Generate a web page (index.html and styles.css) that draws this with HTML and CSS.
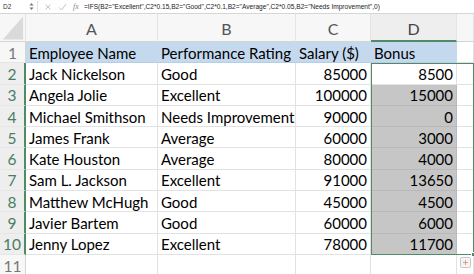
FILE: index.html
```html
<!DOCTYPE html>
<html>
<head>
<meta charset="utf-8">
<link rel="stylesheet" href="styles.css">
</head>
<body>
<div class="fbar">
  <div class="namebox">D2</div>
  <div class="spin"><svg width="5" height="9" viewBox="0 0 5 9"><path d="M0.5 3.5 L2.5 1 L4.5 3.5 Z M0.5 5.5 L2.5 8 L4.5 5.5 Z" fill="#777"/></svg></div>
  <div class="fsep"></div>
  <div class="ficons">
    <svg width="8" height="8" viewBox="0 0 8 8"><path d="M1.5 1.5 L6.5 6.5 M6.5 1.5 L1.5 6.5" stroke="#c4c4c4" stroke-width="1"/></svg>
    <svg width="9" height="8" viewBox="0 0 9 8"><path d="M1 4.5 L3.5 7 L8 1" stroke="#c4c4c4" stroke-width="1" fill="none"/></svg>
    <span class="fx">fx</span>
  </div>
  <div class="formula">=IFS(B2="Excellent",C2*0.15,B2="Good",C2*0.1,B2="Average",C2*0.05,B2="Needs Improvement",0)</div>
</div>
<div class="sheet">
  <div class="ch corner"><svg width="26" height="28" viewBox="0 0 26 28"><path d="M24 2 L24 26 L3 26 Z" fill="#dadada"/></svg></div>
  <div class="ch">A</div><div class="ch">B</div><div class="ch">C</div><div class="ch chsel">D</div><div class="ch"></div>

  <div class="rh">1</div><div class="c hd">Employee Name</div><div class="c hd">Performance Rating</div><div class="c hd">Salary ($)</div><div class="c hd">Bonus</div><div class="c"></div>

  <div class="rh sel">2</div><div class="c">Jack Nickelson</div><div class="c">Good</div><div class="c n">85000</div><div class="c n">8500</div><div class="c"></div>
  <div class="rh sel">3</div><div class="c">Angela Jolie</div><div class="c">Excellent</div><div class="c n">100000</div><div class="c n g">15000</div><div class="c"></div>
  <div class="rh sel">4</div><div class="c">Michael Smithson</div><div class="c">Needs Improvement</div><div class="c n">90000</div><div class="c n g">0</div><div class="c"></div>
  <div class="rh sel">5</div><div class="c">James Frank</div><div class="c">Average</div><div class="c n">60000</div><div class="c n g">3000</div><div class="c"></div>
  <div class="rh sel">6</div><div class="c">Kate Houston</div><div class="c">Average</div><div class="c n">80000</div><div class="c n g">4000</div><div class="c"></div>
  <div class="rh sel">7</div><div class="c">Sam L. Jackson</div><div class="c">Excellent</div><div class="c n">91000</div><div class="c n g">13650</div><div class="c"></div>
  <div class="rh sel">8</div><div class="c">Matthew McHugh</div><div class="c">Good</div><div class="c n">45000</div><div class="c n g">4500</div><div class="c"></div>
  <div class="rh sel">9</div><div class="c">Javier Bartem</div><div class="c">Good</div><div class="c n">60000</div><div class="c n g">6000</div><div class="c"></div>
  <div class="rh sel">10</div><div class="c">Jenny Lopez</div><div class="c">Excellent</div><div class="c n">78000</div><div class="c n g">11700</div><div class="c"></div>
  <div class="rh">11</div><div class="c"></div><div class="c"></div><div class="c"></div><div class="c"></div><div class="c qa"><svg width="11" height="11" viewBox="0 0 11 11"><rect x="0.5" y="0.5" width="10" height="10" rx="1" fill="#f4f4f4" stroke="#c8c8c8"/><path d="M5.5 3 V8 M3 5.5 H8" stroke="#e0a070" stroke-width="1"/></svg></div>

  <div class="range"><div class="handle"></div></div>
</div>
</body>
</html>
```
FILE: styles.css
```css
* { box-sizing: border-box; }
html, body { margin: 0; padding: 0; background: #fff; }
body { width: 474px; height: 274px; overflow: hidden; font-family: "Liberation Sans", Arial, sans-serif; }

.fbar {
  height: 14px;
  display: flex;
  align-items: center;
  border-bottom: 1px solid #d6d6d6;
  background: #fff;
}
.namebox { width: 29px; padding-left: 3px; font-size: 6.5px; color: #333; }
.spin { width: 7px; display: flex; align-items: center; }
.fsep { width: 1px; height: 11px; background: #e2e2e2; margin-left: 1px; }
.ficons { display: flex; align-items: center; gap: 6px; padding-left: 6px; width: 46px; }
.fx { font-family: "Liberation Serif", serif; font-style: italic; font-size: 8px; color: #888; }
.formula { font-size: 6.6px; color: #222; white-space: nowrap; }

.sheet {
  position: relative;
  display: grid;
  grid-template-columns: 26px 132px 138px 75px 86px 17px;
  grid-template-rows: 28px repeat(11, 21.3px);
  font-family: "Lato", "Liberation Sans", sans-serif;
  font-size: 15px;
  color: #000;
}
.ch {
  background: #f7f7f7;
  border-right: 1px solid #e4e4e4;
  border-bottom: 1px solid #d4d4d4;
  display: flex; align-items: center; justify-content: center;
  color: #555;
  font-size: 16px;
  padding-top: 2px;
}
.ch.corner { padding: 0; align-items: flex-start; justify-content: flex-start; }
.ch.chsel { border-bottom: 2px solid #4e8b66; background: #eeeeee; color: #444; }
.rh {
  background: #f7f7f7;
  border-right: 1px solid #d4d4d4;
  border-bottom: 1px solid #e6e6e6;
  display: flex; align-items: center; justify-content: center;
  color: #777;
  font-size: 15.5px;
  padding-top: 1px;
}
.rh.sel { color: #4a7d60; border-right: 2px solid #4e8b66; background: #eeeeee; }
.c {
  border-right: 1px solid #e2e2e2;
  border-bottom: 1px solid #e2e2e2;
  display: flex; align-items: center;
  padding: 1px 3px 0 3px;
  white-space: nowrap; overflow: hidden;
}
.c.hd { background: #c5d9ee; border-right-color: #c5d9ee; border-bottom-color: #b7cde4; }
.c.n { justify-content: flex-end; }
.c.g { background: #c6c6c6; border-bottom-color: #b9b9b9; border-right-color: #b9b9b9; }
.c.qa { align-items: flex-start; justify-content: center; padding: 2px 0 0 0; }

.range {
  position: absolute;
  inset: 0;
  grid-column: 5;
  grid-row: 3 / 12;
  border: 1.5px solid #4e8b66;
  pointer-events: none;
}
.handle {
  position: absolute;
  right: -3px; bottom: -3px;
  width: 5px; height: 5px;
  background: #4e8b66;
  border: 1px solid #fff;
}
```
